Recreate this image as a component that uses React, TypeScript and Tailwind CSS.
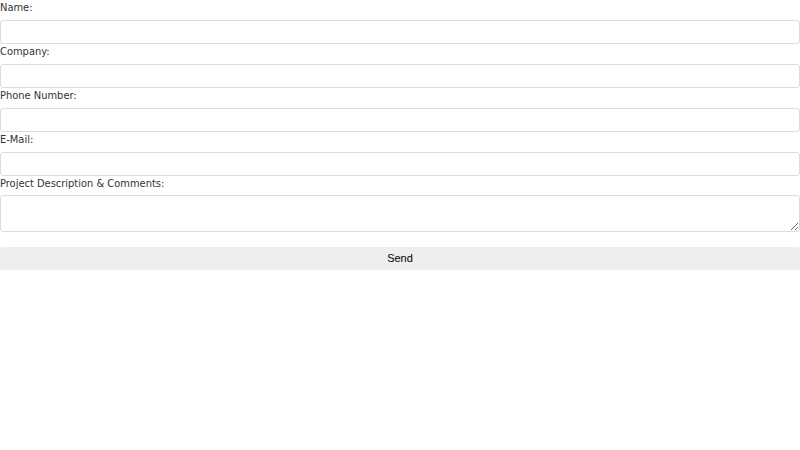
const fields = [
  { label: "Name:", type: "text" },
  { label: "Company:", type: "text" },
  { label: "Phone Number:", type: "tel" },
  { label: "E-Mail:", type: "email" },
]

export default function App() {
  return (
    <form className="flex w-[800px] flex-col font-['DejaVu_Sans_Condensed','DejaVu_Sans',sans-serif] text-[11px] text-[#333]">
      {fields.map((f) => (
        <label key={f.label} className="flex flex-col">
          <span className="h-5 leading-[15px]">{f.label}</span>
          <input
            type={f.type}
            className="h-6 w-full rounded-[3px] border border-[#dcdcdc] bg-white px-1 outline-none"
          />
        </label>
      ))}
      <label className="flex flex-col">
        <span className="h-[19px] leading-[15px]">Project Description &amp; Comments:</span>
        <textarea className="h-[37px] w-full resize-y rounded-[3px] border border-[#dcdcdc] bg-white px-1 outline-none" />
      </label>
      <button
        type="button"
        className="mt-[15px] h-[23px] w-full rounded-[3px] bg-[#eeeeee] font-['Liberation_Sans',Arial,sans-serif] text-[11px] text-black"
      >
        Send
      </button>
    </form>
  )
}
